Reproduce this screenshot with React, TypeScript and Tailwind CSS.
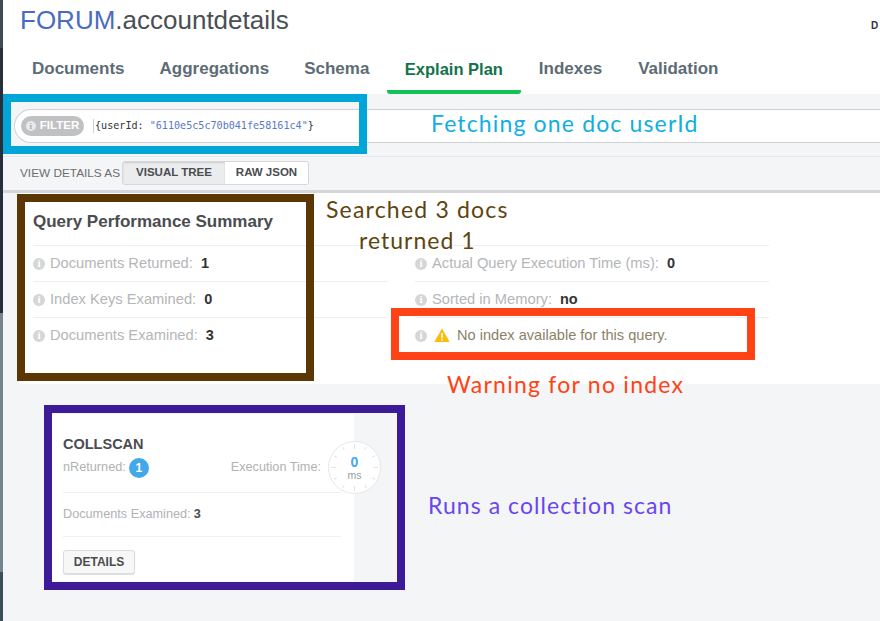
const leftTabs = ['Documents', 'Aggregations', 'Schema'];
const rightTabs = ['Indexes', 'Validation'];

function InfoDot() {
  return (
    <span className="flex h-[12px] w-[12px] shrink-0 items-center justify-center rounded-full bg-[#d4d6d8]">
      <span className="font-['Liberation_Serif',serif] text-[11px] leading-none font-bold text-white">i</span>
    </span>
  );
}

function StatRow({ label, value }: { label: string; value: string }) {
  return (
    <div className="flex h-[36px] items-center gap-[5px] border-t border-[#eeeff0]">
      <InfoDot />
      <span className="text-[14.7px] text-[#b4b6b8]">{label}:</span>
      <span className="ml-[3px] text-[14.5px] font-bold text-[#333]">{value}</span>
    </div>
  );
}

function Stopwatch() {
  const ticks = [0, 30, 60, 90, 120, 150, 180, 210, 240, 270, 300, 330];
  return (
    <div className="absolute top-[27px] left-[276px] flex h-[53px] w-[53px] flex-col items-center justify-center rounded-full border border-[#e6e7e9] bg-white">
      <svg className="absolute inset-0" viewBox="0 0 52 52" width="51" height="51">
        {ticks.map((t) => (
          <line key={t} x1="26" y1="2" x2="26" y2={t % 90 === 0 ? 7 : 5} stroke="#dfe1e3" strokeWidth="1" transform={`rotate(${t} 26 26)`} />
        ))}
      </svg>
      <span className="relative text-[14px] leading-[14px] font-bold text-[#43a8ea]">0</span>
      <span className="relative text-[10.5px] leading-[12px] text-[#9a9c9e]">ms</span>
    </div>
  );
}

export default function App() {
  return (
    <div className="relative flex h-[621px] w-[880px] overflow-hidden bg-white font-['Liberation_Sans',sans-serif]">
      <div className="flex w-[3px] shrink-0 flex-col">
        <div className="h-[48px] bg-[#3f4a57]" />
        <div className="h-[265px] bg-[#26303d]" />
        <div className="h-[259px] bg-[#76848c]" />
        <div className="flex-1 bg-[#3b4e5c]" />
      </div>

      <div className="flex min-w-0 flex-1 flex-col">
        {/* namespace header */}
        <div className="relative h-[46px] pt-[4px] pl-[17px] text-[26px] leading-[32px] text-[#4a4f54]">
          <span className="text-[#4a6cc0]">FORUM</span>.accountdetails
          <span className="absolute top-[20px] left-[868px] text-[10px] leading-[12px] font-bold text-[#333]">D</span>
        </div>

        {/* tabs */}
        <div className="flex h-[48px] pl-[11.5px] text-[17px] font-bold text-[#5d6c74]">
          {leftTabs.map((t) => (
            <div key={t} className="px-[17.5px] pt-[13px] leading-[20px]">{t}</div>
          ))}
          <div className="h-[48px] w-[134px] rounded-b-[3px] border-b-[4px] border-[#13c257] pt-[13px] text-center text-[16.5px] leading-[20px] text-[#13734a]">Explain Plan</div>
          {rightTabs.map((t) => (
            <div key={t} className="px-[18px] pt-[13px] leading-[20px]">{t}</div>
          ))}
        </div>

        {/* query bar */}
        <div className="h-[99px] border-b-[3px] border-[#d5d6d8] bg-[#f4f5f7]">
          <div className="pt-[15px] pl-[11px]">
            <div className="flex h-[34px] items-center rounded-l-full border-y border-l border-[#cfd1d3] bg-white pl-[6px]">
              <span className="flex h-[20px] w-[63px] items-center justify-center gap-[4px] rounded-full bg-[#bfc1c3] text-[11.5px] font-bold text-white">
                <span className="flex h-[10px] w-[10px] items-center justify-center rounded-full bg-[#e8e9ea] font-['Liberation_Serif',serif] text-[9px] leading-none text-[#aaacae]">i</span>
                FILTER
              </span>
              <span className="ml-[9px] h-[14px] w-[1px] bg-[#cfd1d3]" />
              <span className="ml-[1px] font-['DejaVu_Sans_Mono',monospace] text-[10.1px] text-[#333]">
                {'{userId: '}
                <span className="text-[#5a78c4]">"6110e5c5c70b041fe58161c4"</span>
                {'}'}
              </span>
            </div>
          </div>
          <div className="mt-[13px] flex items-start border-t border-[#e8e9eb] pt-[4px] pl-[17px]">
            <span className="w-[102px] text-[11.8px] leading-[24px] whitespace-nowrap text-[#6b6d70]">VIEW DETAILS AS</span>
            <div className="flex h-[24px] overflow-hidden rounded-[3px] border border-[#d6d7d9] text-[11.5px] font-bold text-[#4a4c4f]">
              <span className="flex w-[102px] items-center justify-center bg-[#ebecee] shadow-[inset_0_1px_2px_#ccc]">VISUAL TREE</span>
              <span className="flex w-[83px] items-center justify-center bg-white">RAW JSON</span>
            </div>
          </div>
        </div>

        {/* summary */}
        <div className="h-[191px] bg-[#f4f5f7] pl-[17px]">
          <div className="h-full bg-white pt-[20px] pl-[13px]">
            <div className="text-[17px] leading-[18px] font-bold text-[#4a4c4f]">Query Performance Summary</div>
            <div className="mt-[14px] flex">
              <div className="w-[355px]">
                <StatRow label="Documents Returned" value="1" />
                <StatRow label="Index Keys Examined" value="0" />
                <StatRow label="Documents Examined" value="3" />
              </div>
              <div className="ml-[27px] w-[354px]">
                <StatRow label="Actual Query Execution Time (ms)" value="0" />
                <StatRow label="Sorted in Memory" value="no" />
                <div className="flex h-[36px] items-center gap-[6px] border-t border-[#eeeff0]">
                  <InfoDot />
                  <svg width="16" height="14" viewBox="0 0 16 14" className="-mt-[2px] ml-[1px]">
                    <path d="M8 0.5 15.7 14H0.3Z" fill="#fbbc0c" />
                    <rect x="7.2" y="5" width="1.6" height="4.8" fill="#fff" />
                    <rect x="7.2" y="10.8" width="1.6" height="1.6" fill="#fff" />
                  </svg>
                  <span className="ml-[1px] text-[14.6px] text-[#8a8268]">No index available for this query.</span>
                </div>
              </div>
            </div>
          </div>
        </div>

        {/* tree */}
        <div className="flex-1 bg-[#f4f5f7] pt-[30px] pl-[49px]">
          <div className="relative h-[167px] w-[302px] rounded-[3px] bg-white pt-[21px] pl-[11px] text-[#b0b2b4]">
            <div className="text-[14.5px] leading-[18px] font-bold text-[#4a4c4f]">COLLSCAN</div>
            <div className="mt-[4px] flex h-[22px] w-[278px] items-center text-[12.7px]">
              nReturned:
              <span className="ml-[3px] flex h-[20px] w-[20px] items-center justify-center rounded-full bg-[#43a8ea] text-[12px] font-bold text-white">1</span>
              <span className="mr-[20px] ml-auto">Execution Time:</span>
            </div>
            <div className="mt-[13px] flex h-[45px] w-[278px] items-center border-y border-[#eeeff0] text-[12.7px]">
              Documents Examined:
              <span className="ml-[3px] font-bold text-[#4a4c4f]">3</span>
            </div>
            <div className="mt-[13px] flex h-[24px] w-[72px] items-center justify-center rounded-[3px] border border-[#dcdddf] bg-[#f7f7f8] text-[12px] font-bold text-[#4a4c4f] shadow-[0_1px_1px_#ddd]">DETAILS</div>
            <Stopwatch />
          </div>
        </div>
      </div>

      {/* markup drawn over the screenshot */}
      <div className="pointer-events-none absolute top-[94px] left-[3px] h-[60px] w-[364px] border-[8px] border-[#00a6d8]" />
      <div className="pointer-events-none absolute top-[194px] left-[17px] h-[187px] w-[297px] border-[8px] border-[#5a3703]" />
      <div className="pointer-events-none absolute top-[308px] left-[391px] h-[52px] w-[364px] border-[8px] border-[#ff4314]" />
      <div className="pointer-events-none absolute top-[405px] left-[44px] h-[185px] w-[361px] border-[8px] border-[#3c1a98]" />

      <div className="absolute top-[109px] left-[431px] font-['Lato',sans-serif] text-[23px] leading-[28px] tracking-[1.15px] whitespace-nowrap text-[#10aee3]">Fetching one doc userId</div>
      <div className="absolute top-[195px] left-[326px] font-['Lato',sans-serif] text-[23px] leading-[28px] tracking-[1.2px] whitespace-nowrap text-[#5e4510]">Searched 3 docs</div>
      <div className="absolute top-[226px] left-[359px] font-['Lato',sans-serif] text-[23px] leading-[28px] tracking-[1px] whitespace-nowrap text-[#5e4510]">returned 1</div>
      <div className="absolute top-[370px] left-[447px] font-['Lato',sans-serif] text-[23px] leading-[28px] tracking-[1.25px] whitespace-nowrap text-[#ff4314]">Warning for no index</div>
      <div className="absolute top-[491px] left-[428px] font-['Lato',sans-serif] text-[23px] leading-[28px] tracking-[1.05px] whitespace-nowrap text-[#6a45ef]">Runs a collection scan</div>
    </div>
  );
}
